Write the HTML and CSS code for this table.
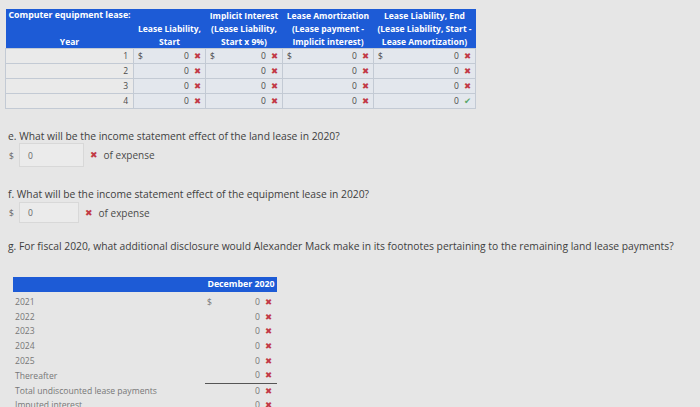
FILE: index.html
```html
<!DOCTYPE html>
<html>
<head>
<meta charset="utf-8">
<link rel="stylesheet" href="styles.css">
</head>
<body>
<div class="page">
  <table class="lease">
    <colgroup><col class="c1"><col class="c2"><col class="c3"><col class="c4"><col class="c5"></colgroup>
    <thead>
      <tr>
        <th class="yearh"><div class="title">Computer equipment lease:</div><div class="yr">Year</div></th>
        <th>Lease Liability,<br>Start</th>
        <th>Implicit Interest<br>(Lease Liability,<br>Start x 9%)</th>
        <th>Lease Amortization<br>(Lease payment -<br>Implicit interest)</th>
        <th>Lease Liability, End<br>(Lease Liability, Start -<br>Lease Amortization)</th>
      </tr>
    </thead>
    <tbody>
      <tr>
        <td class="year">1</td>
        <td><div class="cell"><span class="cur">$</span><span class="val">0</span><span class="x">✖</span></div></td>
        <td><div class="cell"><span class="cur">$</span><span class="val">0</span><span class="x">✖</span></div></td>
        <td><div class="cell"><span class="cur">$</span><span class="val">0</span><span class="x">✖</span></div></td>
        <td><div class="cell"><span class="cur">$</span><span class="val">0</span><span class="x">✖</span></div></td>
      </tr>
      <tr>
        <td class="year">2</td>
        <td><div class="cell"><span class="cur"></span><span class="val">0</span><span class="x">✖</span></div></td>
        <td><div class="cell"><span class="cur"></span><span class="val">0</span><span class="x">✖</span></div></td>
        <td><div class="cell"><span class="cur"></span><span class="val">0</span><span class="x">✖</span></div></td>
        <td><div class="cell"><span class="cur"></span><span class="val">0</span><span class="x">✖</span></div></td>
      </tr>
      <tr>
        <td class="year">3</td>
        <td><div class="cell"><span class="cur"></span><span class="val">0</span><span class="x">✖</span></div></td>
        <td><div class="cell"><span class="cur"></span><span class="val">0</span><span class="x">✖</span></div></td>
        <td><div class="cell"><span class="cur"></span><span class="val">0</span><span class="x">✖</span></div></td>
        <td><div class="cell"><span class="cur"></span><span class="val">0</span><span class="x">✖</span></div></td>
      </tr>
      <tr>
        <td class="year">4</td>
        <td><div class="cell"><span class="cur"></span><span class="val">0</span><span class="x">✖</span></div></td>
        <td><div class="cell"><span class="cur"></span><span class="val">0</span><span class="x">✖</span></div></td>
        <td><div class="cell"><span class="cur"></span><span class="val">0</span><span class="x">✖</span></div></td>
        <td><div class="cell"><span class="cur"></span><span class="val">0</span><span class="ok">✔</span></div></td>
      </tr>
    </tbody>
  </table>

  <p class="q q-e">e. What will be the income statement effect of the land lease in 2020?</p>
  <div class="answer">
    <span class="dollar">$</span>
    <span class="box box-e">0</span>
    <span class="x">✖</span>
    <span class="unit">of expense</span>
  </div>

  <p class="q q-f">f. What will be the income statement effect of the equipment lease in 2020?</p>
  <div class="answer answer-f">
    <span class="dollar">$</span>
    <span class="box box-f">0</span>
    <span class="x">✖</span>
    <span class="unit">of expense</span>
  </div>

  <p class="q q-g">g. For fiscal 2020, what additional disclosure would Alexander Mack make in its footnotes pertaining to the remaining land lease payments?</p>

  <table class="disc">
    <thead>
      <tr><th class="lab"></th><th class="dec">December 2020</th></tr>
    </thead>
    <tbody>
      <tr class="first"><td class="lab">2021</td><td><div class="cell2"><span class="cur">$</span><span class="val">0</span><span class="x">✖</span></div></td></tr>
      <tr><td class="lab">2022</td><td><div class="cell2"><span class="cur"></span><span class="val">0</span><span class="x">✖</span></div></td></tr>
      <tr><td class="lab">2023</td><td><div class="cell2"><span class="cur"></span><span class="val">0</span><span class="x">✖</span></div></td></tr>
      <tr><td class="lab">2024</td><td><div class="cell2"><span class="cur"></span><span class="val">0</span><span class="x">✖</span></div></td></tr>
      <tr><td class="lab">2025</td><td><div class="cell2"><span class="cur"></span><span class="val">0</span><span class="x">✖</span></div></td></tr>
      <tr class="sum"><td class="lab">Thereafter</td><td><div class="cell2"><span class="cur"></span><span class="val">0</span><span class="x">✖</span></div></td></tr>
      <tr><td class="lab">Total undiscounted lease payments</td><td><div class="cell2"><span class="cur"></span><span class="val">0</span><span class="x">✖</span></div></td></tr>
      <tr><td class="lab">Imputed interest</td><td><div class="cell2"><span class="cur"></span><span class="val">0</span><span class="x">✖</span></div></td></tr>
    </tbody>
  </table>
</div>
</body>
</html>
```

FILE: styles.css
```css
html, body {
  margin: 0;
  padding: 0;
  background: #e6e6e6;
  width: 700px;
  height: 407px;
  overflow: hidden;
  font-family: "Open Sans", "Liberation Sans", sans-serif;
}
.page {
  padding: 9px 0 0 5px;
  color: #4a4a4a;
}

/* top table */
.lease {
  border-collapse: collapse;
  table-layout: fixed;
  width: 470px;
  font-size: 8.5px;
}
.c1 { width: 128px; }
.c2 { width: 72px; }
.c3 { width: 77px; }
.c4 { width: 91px; }
.c5 { width: 102px; }
.lease th {
  background: #1d5bd6;
  color: #fff;
  font-weight: 700;
  line-height: 13px;
  height: 39px;
  padding: 0 1px;
  vertical-align: bottom;
  text-align: center;
  white-space: nowrap;
}
.lease th.yearh {
  vertical-align: top;
  text-align: left;
  padding: 0 3px;
  font-size: 8.8px;
}
.yearh .yr {
  text-align: center;
  margin-top: 13px;
  font-size: 8.5px;
}
.lease td {
  height: 14px;
  padding: 0;
  border: 1px solid #c3cad4;
  background: #e3e7ed;
  line-height: 14px;
}
.lease td.year {
  background: #eaeaea;
  text-align: right;
  padding-right: 5px;
}
.cell, .cell2 {
  display: flex;
  align-items: center;
  padding: 0 4px 0 4px;
}
.cur { flex: 1; }
.val { margin-right: 5px; }
.x {
  color: #c23a46;
  font-size: 8.5px;
  font-family: "DejaVu Sans", sans-serif;
}
.ok {
  color: #5aa86a;
  font-size: 8.5px;
  font-family: "DejaVu Sans", sans-serif;
}

/* questions */
.q {
  margin: 0;
  padding-left: 3px;
  font-size: 10.3px;
  line-height: 13px;
  color: #3e3e3e;
  white-space: nowrap;
}
.q-e { margin-top: 21px; }
.q-f { margin-top: 21px; }
.q-g { margin-top: 17px; }
.answer {
  display: flex;
  align-items: center;
  font-size: 10px;
  color: #4a4a4a;
}
.dollar {
  width: 10px;
  padding-left: 4px;
  font-size: 8.5px;
  color: #666;
}
.box {
  display: flex;
  align-items: center;
  height: 24px;
  box-sizing: border-box;
  border: 1px solid #d8d8d8;
  background: #ebebeb;
  padding-left: 8px;
  font-size: 8.5px;
  color: #666;
}
.box-e { width: 65px; }
.box-f { width: 60px; height: 21px; }
.answer .x { margin-left: 6px; font-size: 9px; }
.answer .unit { margin-left: 6px; }
.answer-f { margin-top: 1px; }

/* disclosure table */
.disc {
  margin: 24px 0 0 8px;
  border-collapse: collapse;
  table-layout: fixed;
  width: 264px;
  font-size: 8.6px;
  color: #777;
}
.disc th {
  background: #1d5bd6;
  color: #fff;
  height: 15px;
  padding: 0;
  font-weight: 700;
  font-size: 8.8px;
  line-height: 15px;
}
.disc th.lab { width: 192px; }
.disc th.dec { text-align: center; }
.disc td {
  padding: 0;
  height: 14.6px;
  line-height: 14px;
}
.disc tr.first td { padding-top: 3px; }
.disc td.lab { padding-left: 2px; }
.cell2 { padding: 0 5px 0 2px; }
.disc tr.sum td:last-child { border-bottom: 1px solid #555; }
```
